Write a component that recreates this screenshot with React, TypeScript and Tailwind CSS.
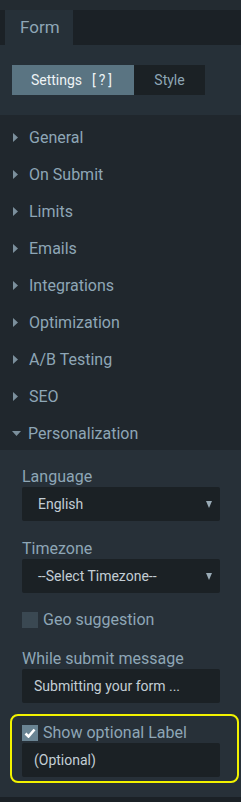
import React from 'react';

const sections = ['General', 'On Submit', 'Limits', 'Emails', 'Integrations', 'Optimization', 'A/B Testing', 'SEO'];

const RightCaret = () => (
  <svg width="5" height="9" viewBox="0 0 5 9" className="shrink-0">
    <path d="M0 0 L5 4.5 L0 9 Z" fill="#7b8f9c" />
  </svg>
);

const DownCaret = () => (
  <svg width="9" height="5" viewBox="0 0 9 5" className="shrink-0">
    <path d="M0 0 L9 0 L4.5 5 Z" fill="#7b8f9c" />
  </svg>
);

const SelectBox = ({ value }: { value: string }) => (
  <div className="flex h-[34px] w-[198px] items-center justify-between rounded-[2px] bg-[#1b2125] pl-[16px] pr-[8px] text-[14px] text-[#c3ced5]">
    <span>{value}</span>
    <svg width="6" height="7" viewBox="0 0 6 7">
      <path d="M0 0 L6 0 L3 7 Z" fill="#9aabb6" />
    </svg>
  </div>
);

const TextBox = ({ value }: { value: string }) => (
  <div className="flex h-[34px] w-[198px] items-center rounded-[2px] bg-[#1b2125] pl-[12px] text-[14px] text-[#c3ced5]">
    {value}
  </div>
);

const Check = ({ checked }: { checked?: boolean }) => (
  <div
    className={`flex h-[16px] w-[16px] shrink-0 items-center justify-center ${
      checked ? 'bg-[#6a8493]' : 'bg-[#3a4852]'
    }`}
  >
    {checked && (
      <svg width="12" height="10" viewBox="0 0 12 10">
        <path d="M1.5 5.5 L4.5 8.5 L10.5 1.5" stroke="#ffffff" strokeWidth="2.6" fill="none" />
      </svg>
    )}
  </div>
);

const Label = ({ children }: { children: React.ReactNode }) => (
  <div className="h-[20px] text-[16px] leading-[20px] text-[#8ea6b6]">{children}</div>
);

export default function App() {
  return (
    <div className="w-[241px] h-[802px] overflow-hidden bg-[#1b2126] font-['Roboto',sans-serif]">
      {/* top strip */}
      <div className="h-[10px] bg-[#232b31]" />

      {/* tabs */}
      <div className="flex h-[35px] bg-[#1b2126] pl-[5px]">
        <div className="flex w-[68px] items-center bg-[#263038] pl-[15px] text-[17px] text-[#8ea6b6]">Form</div>
      </div>

      {/* settings / style toggle */}
      <div className="h-[70px] bg-[#263038] pl-[12px] pt-[20px]">
        <div className="flex h-[30px] text-[14px]">
          <div className="flex w-[122px] items-center justify-center bg-[#5a7482] text-[#eef3f5]">
            Settings<span className="ml-[10px] tracking-[3px]">[?]</span>
          </div>
          <div className="flex w-[71px] items-center justify-center bg-[#1b2125] text-[#8ea6b6]">Style</div>
        </div>
      </div>

      {/* section list */}
      <div className="h-[335px] bg-[#20272d] pt-[4px]">
        {sections.map((s) => (
          <div key={s} className="flex h-[37px] items-center gap-[11px] pl-[13px] text-[16px] text-[#8ea6b6]">
            <RightCaret />
            <span>{s}</span>
          </div>
        ))}
        <div className="flex h-[37px] items-center gap-[7px] pl-[12px] text-[16px] text-[#8ea6b6]">
          <DownCaret />
          <span>Personalization</span>
        </div>
      </div>

      {/* personalization content */}
      <div className="h-[347px] bg-[#273038] pt-[17px]">
        <div className="pl-[22px]">
          <Label>Language</Label>
          <SelectBox value="English" />
          <div className="mt-[18px]">
            <Label>Timezone</Label>
            <SelectBox value="--Select Timezone--" />
          </div>
          <div className="mt-[17px] flex h-[20px] items-center gap-[5px] text-[16px] text-[#8ea6b6]">
            <Check />
            <span>Geo suggestion</span>
          </div>
          <div className="mt-[19px]">
            <Label>While submit message</Label>
            <TextBox value="Submitting your form ..." />
          </div>
        </div>

        <div className="ml-[10px] mt-[11px] h-[69px] w-[229px] rounded-[8px] border-2 border-[#f2f200] pl-[10px] pt-[7px]">
          <div className="flex h-[20px] items-center gap-[5px] text-[16px] text-[#8ea6b6]">
            <Check checked />
            <span>Show optional Label</span>
          </div>
          <TextBox value="(Optional)" />
        </div>
      </div>
    </div>
  );
}
